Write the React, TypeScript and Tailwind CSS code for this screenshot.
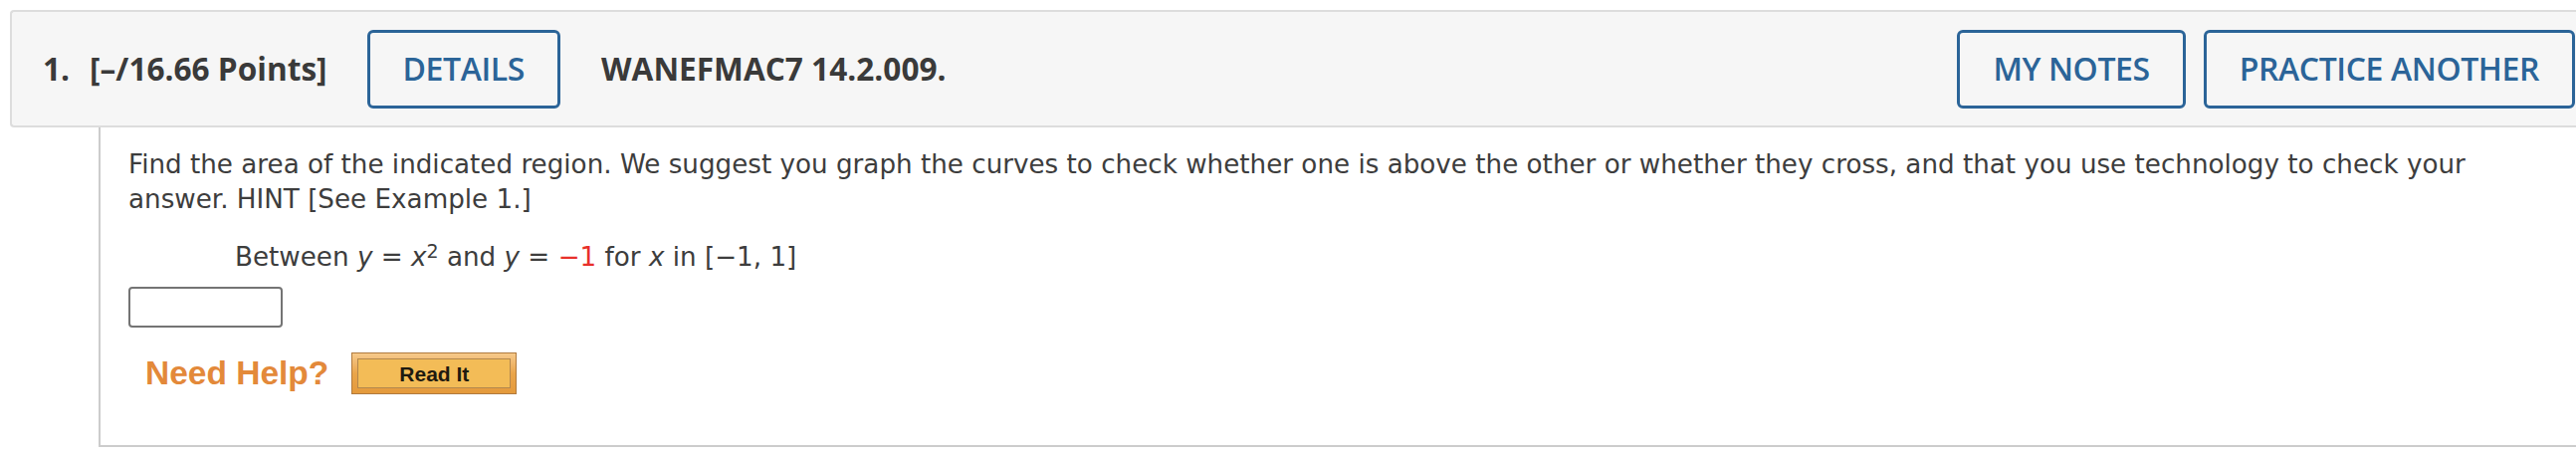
import React from "react";

const btn =
  "h-[79px] px-[33px] border-[3px] border-[#2b6498] rounded-[6px] text-[#2b6498] text-[32px] font-semibold bg-transparent leading-none tracking-[-0.4px]";

export default function App() {
  return (
    <div className="w-[2588px] h-[460px] bg-white overflow-hidden pt-[10px] pl-[10px] font-['Open_Sans',sans-serif]">
      <div className="flex items-center h-[118px] bg-[#f6f6f6] border-2 border-r-0 border-[#dddddd] rounded-l-[4px] pl-[31px]">
        <span className="font-bold text-[31.6px] text-[#3a3a3a]">1.</span>
        <span className="ml-[20px] font-bold text-[31.6px] text-[#3a3a3a]">[–/16.66 Points]</span>
        <button className={`${btn} ml-[40px]`}>DETAILS</button>
        <span className="ml-[41px] font-bold text-[31.6px] text-[#3a3a3a]">WANEFMAC7 14.2.009.</span>
        <div className="ml-auto flex gap-[18px] mr-px">
          <button className={btn}>MY NOTES</button>
          <button className={btn}>PRACTICE ANOTHER</button>
        </div>
      </div>
      <div className="ml-[89px] h-[321px] border-l-2 border-b-2 border-[#cccccc] pl-[28px] pt-[20px] font-['DejaVu_Sans',Verdana,sans-serif] text-[26.2px] leading-[35px] text-[#3d3d3d]">
        <p>
          Find the area of the indicated region. We suggest you graph the curves to check whether one is above the other or whether they cross, and that you use technology to check your
          <br />
          answer. HINT [See Example 1.]
        </p>
        <p className="mt-[23px] pl-[107px]">
          Between <i>y</i> = <i>x</i>
          <sup className="text-[19px] relative top-[-8px]">2</sup> and <i>y</i> ={" "}
          <span className="text-[#e8302a]">−1</span> for <i>x</i> in [−1, 1]
        </p>
        <input
          type="text"
          className="mt-[12px] block w-[155px] h-[41px] border-2 border-[#747474] rounded-[4px] bg-white"
        />
        <div className="mt-[25px] flex items-center">
          <span className="ml-[17px] font-['Liberation_Sans',Arial,sans-serif] font-bold text-[33.5px] leading-none text-[#e3893a]">
            Need Help?
          </span>
          <button className="ml-[23px] w-[166px] h-[42px] p-[5px] border border-[#b07a3e] bg-gradient-to-b from-[#f6c98a] via-[#eaa54a] to-[#e49a3c] flex">
            <span className="flex-1 flex items-center justify-center border border-[#b3874d] bg-[#f3bc57] font-['Liberation_Sans',Arial,sans-serif] font-bold text-[21px] text-[#1e1a10] leading-none">
              Read It
            </span>
          </button>
        </div>
      </div>
    </div>
  );
}
